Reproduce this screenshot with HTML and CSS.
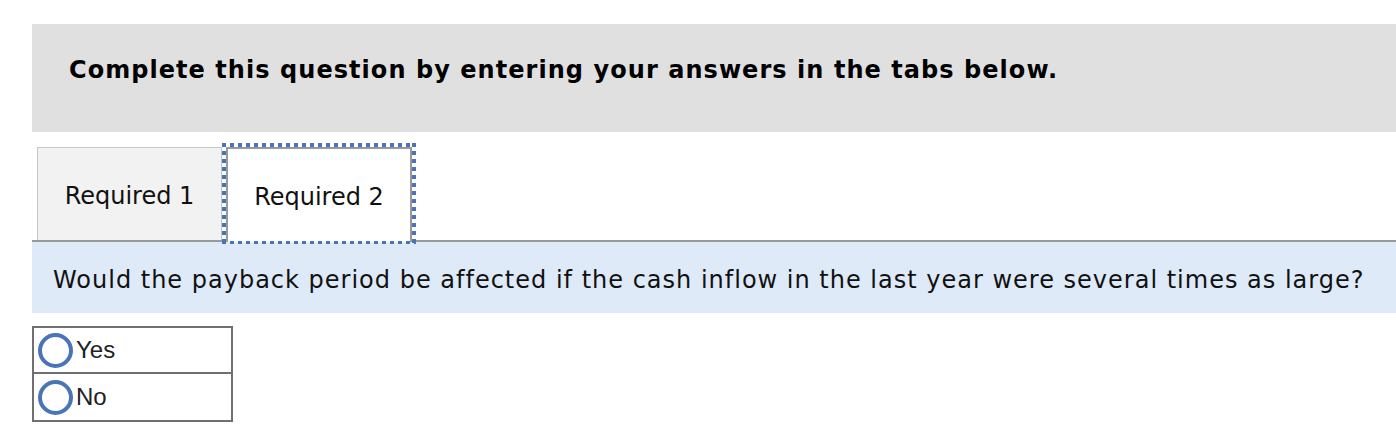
FILE: index.html
```html
<!DOCTYPE html>
<html>
<head>
<meta charset="utf-8">
<link rel="stylesheet" href="styles.css">
</head>
<body>
<div class="page">
  <div class="banner">
    <h2 class="banner-title">Complete this question by entering your answers in the tabs below.</h2>
  </div>
  <div class="tabs">
    <div class="tab">Required 1</div>
    <div class="tab tab-active">Required 2</div>
  </div>
  <div class="prompt">Would the payback period be affected if the cash inflow in the last year were several times as large?</div>
  <div class="choices">
    <label class="choice"><span class="radio"></span><span class="choice-text">Yes</span></label>
    <label class="choice"><span class="radio"></span><span class="choice-text">No</span></label>
  </div>
</div>
</body>
</html>
```
FILE: styles.css
```css
html, body {
  margin: 0;
  padding: 0;
  background: #ffffff;
}
.page {
  padding: 24px 0 0 32px;
  font-family: "DejaVu Sans", Verdana, sans-serif;
  color: #000;
}
.banner {
  background: #e0e0e0;
  height: 108px;
  padding-left: 37px;
  box-sizing: border-box;
  padding-top: 31px;
}
.banner-title {
  margin: 0;
  font-size: 24px;
  font-weight: bold;
  line-height: 30px;
  letter-spacing: 1.05px;
}
.tabs {
  display: flex;
  align-items: flex-end;
  margin-top: 15px;
  padding-left: 5px;
  border-bottom: 2px solid #999999;
  height: 93px;
}
.tab {
  box-sizing: border-box;
  height: 93px;
  width: 185px;
  padding-top: 4px;
  background: #f2f2f2;
  border: 1px solid #c6c6c6;
  border-bottom: none;
  font-size: 24px;
  display: flex;
  align-items: center;
  justify-content: center;
  color: #111;
}
.tab-active {
  position: relative;
  width: 186px;
  margin-left: 4px;
  background: #ffffff;
  border: 2px solid #999999;
  border-bottom: none;
  margin-bottom: -2px;
  height: 95px;
  padding-top: 2px;
}
.tab-active::after {
  content: "";
  position: absolute;
  left: -6px;
  right: -6px;
  top: -6px;
  bottom: -2px;
  pointer-events: none;
  background:
    repeating-linear-gradient(90deg, #4a74b8 0 4px, transparent 4px 8px) left top / 100% 4px no-repeat,
    repeating-linear-gradient(90deg, #4a74b8 0 4px, transparent 4px 8px) left bottom / 100% 3px no-repeat,
    repeating-linear-gradient(180deg, #4a74b8 0 4px, transparent 4px 8px) left top / 4px 100% no-repeat,
    repeating-linear-gradient(180deg, #4a74b8 0 4px, transparent 4px 8px) right top / 4px 100% no-repeat;
}
.prompt {
  background: #deeaf7;
  height: 71px;
  box-sizing: border-box;
  padding-left: 21px;
  padding-top: 4px;
  font-size: 24px;
  letter-spacing: 1px;
  display: flex;
  align-items: center;
  color: #111;
}
.choices {
  margin-top: 13px;
  width: 201px;
  border: 2px solid #707070;
  box-sizing: border-box;
}
.choice {
  display: flex;
  align-items: center;
  height: 44px;
  padding-left: 4px;
  font-family: "Liberation Sans", Arial, sans-serif;
  font-size: 24px;
  color: #222;
}
.choice + .choice {
  height: 46px;
  border-top: 2px solid #707070;
}
.radio {
  width: 35px;
  height: 35px;
  box-sizing: border-box;
  border: 4px solid #4a74b8;
  border-radius: 50%;
  margin-right: 3px;
}
```
